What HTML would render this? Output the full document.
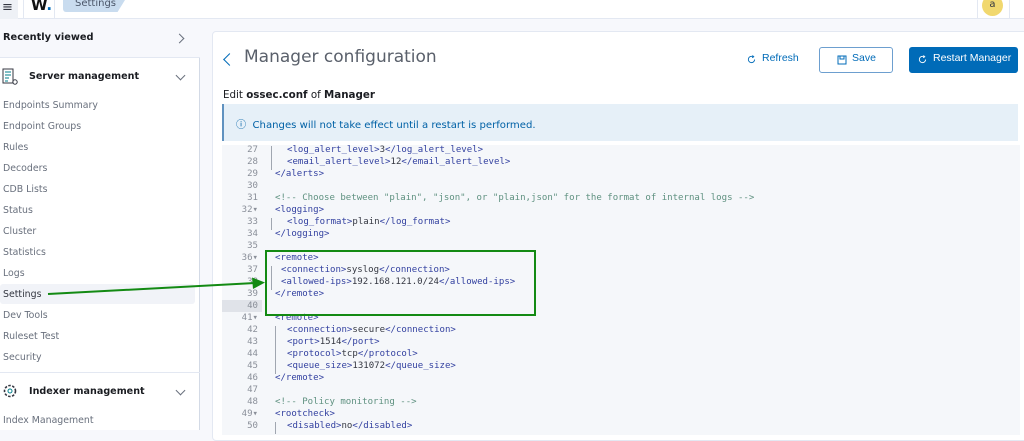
<!DOCTYPE html>
<html><head><meta charset="utf-8"><style>
*{margin:0;padding:0;box-sizing:border-box}
body{width:1024px;height:430px;overflow:hidden;background:#f7f8fc;font-family:"DejaVu Sans","Liberation Sans",sans-serif;color:#343741;position:relative}
.a{position:absolute}
.top{left:0;top:0;width:1024px;height:19px;background:#fff;border-bottom:1px solid #e3e8f2}
.side{left:0;top:20px;width:200px;height:410px;background:#fff;border-right:1px solid #d3dae6}
.si{position:absolute;left:3px;font-size:9.4px;color:#69707d}
.card{left:212px;top:31px;width:820px;height:410px;background:#fff;border:1px solid #e3e8f2;border-radius:4px}
.code{left:222px;top:145px;width:798px;height:290px;background:#f5f7fa}
.ln{position:absolute;left:222px;width:36px;text-align:right;font:9.05px "DejaVu Sans Mono",monospace;color:#8a8f99}
.cl{position:absolute;font:9.05px "DejaVu Sans Mono",monospace;color:#3341a0;white-space:pre}
.cm{color:#5f9180}
.tx{color:#343741}
.g{position:absolute;width:1px;background:#a0a6b0}
.chev{position:absolute;width:7px;height:7px;border-right:1.3px solid #69707d;border-bottom:1.3px solid #69707d}
.c{position:absolute;left:0;top:2px}
</style></head><body>
<div class="a top"></div>
<div class="a" style="left:0;top:0;width:18px;height:19px;background:#eef1f6"></div>
<div class="a" style="left:2px;top:0px;font-size:13px;color:#343741">≡</div>
<div class="a" style="left:23px;top:0;width:1px;height:19px;background:#e3e8f2"></div>
<div class="a" style="left:31px;top:-4px;font-weight:bold;font-size:15px;color:#111">W<span style="color:#006bb8">.</span></div>
<div class="a" style="left:54px;top:0;width:1px;height:19px;background:#e3e8f2"></div>
<div class="a" style="left:63px;top:0;width:62px;height:12px;background:#c9dcef;clip-path:polygon(0 0,100% 0,88% 100%,0 100%);border-radius:0 0 0 3px"></div>
<div class="a" style="left:75px;top:-2px;font-size:10px;color:#4a5568">Settings</div>
<div class="a" style="left:977px;top:0;width:1px;height:19px;background:#e3e8f2"></div>
<div class="a" style="left:982px;top:-5px;width:21px;height:21px;border-radius:50%;background:#f1d86f;font-size:10px;text-align:center;line-height:19px">a</div>
<div class="a" style="left:1009px;top:0;width:1px;height:19px;background:#e3e8f2"></div>

<div class="a side"></div>
<div class="a" style="left:0;top:20px;width:200px;height:38px;background:#f7f8fc;border-bottom:1px solid #e3e8f2"></div>
<div class="a" style="left:3px;top:32px;font-size:9.8px;font-weight:bold;color:#1a1c21">Recently viewed</div>
<div class="chev" style="left:176px;top:35px;transform:rotate(-45deg)"></div>
<svg class="a" style="left:2px;top:68px" width="16" height="18" viewBox="0 0 16 18"><rect x="1" y="1" width="10" height="14" fill="none" stroke="#343741" stroke-width="1"/><path d="M3 4h6M3 7h6M3 10h4M3 13h3" stroke="#007e8a"/><circle cx="13" cy="14" r="2.2" fill="none" stroke="#343741"/></svg>
<div class="a" style="left:29px;top:71px;font-size:9.6px;font-weight:bold;color:#1a1c21">Server management</div>
<div class="chev" style="left:177px;top:72px;transform:rotate(45deg)"></div>
<div class="si" style="top:100px">Endpoints Summary</div>
<div class="si" style="top:121px">Endpoint Groups</div>
<div class="si" style="top:142px">Rules</div>
<div class="si" style="top:163px">Decoders</div>
<div class="si" style="top:184px">CDB Lists</div>
<div class="si" style="top:205px">Status</div>
<div class="si" style="top:226px">Cluster</div>
<div class="si" style="top:247px">Statistics</div>
<div class="si" style="top:268px">Logs</div>
<div class="a" style="left:0;top:284px;width:195px;height:20px;background:#f1f3f8;border-radius:3px"></div>
<div class="si" style="top:289px;color:#343741">Settings</div>
<div class="si" style="top:310px">Dev Tools</div>
<div class="si" style="top:331px">Ruleset Test</div>
<div class="si" style="top:352px">Security</div>
<div class="a" style="left:0;top:372px;width:200px;height:1px;background:#e3e8f2"></div>
<svg class="a" style="left:2px;top:383px" width="16" height="16" viewBox="0 0 16 16"><circle cx="8" cy="8" r="5.5" fill="none" stroke="#343741" stroke-dasharray="2.5 1.5" stroke-width="1.6"/><circle cx="8" cy="8" r="2" fill="none" stroke="#007e8a"/></svg>
<div class="a" style="left:29px;top:386px;font-size:9.6px;font-weight:bold;color:#1a1c21">Indexer management</div>
<div class="chev" style="left:177px;top:387px;transform:rotate(45deg)"></div>
<div class="si" style="top:415px">Index Management</div>

<div class="a card"></div>
<div class="chev" style="left:225px;top:55px;width:9px;height:9px;border-color:#006bb8;border-width:1.5px;transform:rotate(135deg)"></div>
<div class="a" style="left:244px;top:47px;font-size:17px;color:#5a606b">Manager configuration</div>
<svg class="a" style="left:747px;top:55px" width="9" height="9" viewBox="0 0 10 10"><path d="M8.5 5A3.5 3.5 0 1 1 6.5 1.8" fill="none" stroke="#006bb8"/><path d="M6 0.5l1.5 1.5-1.8 1" fill="none" stroke="#006bb8"/></svg>
<div class="a" style="left:762px;top:52px;font-size:10.5px;color:#006bb8;font-family:'Liberation Sans',sans-serif">Refresh</div>
<div class="a" style="left:819px;top:47px;width:74px;height:26px;border:1px solid #6d9fcf;border-radius:3px"></div>
<svg class="a" style="left:837px;top:55px" width="10" height="10" viewBox="0 0 10 10"><rect x="1" y="1" width="8" height="8" fill="none" stroke="#006bb8"/><rect x="3" y="1" width="4" height="3" fill="none" stroke="#006bb8"/></svg>
<div class="a" style="left:852px;top:52px;font-size:10.5px;color:#006bb8;font-family:'Liberation Sans',sans-serif">Save</div>
<div class="a" style="left:909px;top:47px;width:109px;height:26px;background:#006bb8;border-radius:3px"></div>
<svg class="a" style="left:918px;top:55px" width="9" height="9" viewBox="0 0 10 10"><path d="M8.5 5A3.5 3.5 0 1 1 6.5 1.8" fill="none" stroke="#fff"/><path d="M6 0.5l1.5 1.5-1.8 1" fill="none" stroke="#fff"/></svg>
<div class="a" style="left:933px;top:52px;font-size:10.5px;color:#fff;font-family:'Liberation Sans',sans-serif">Restart Manager</div>
<div class="a" style="left:223px;top:89px;font-size:10.3px;color:#1a1c21">Edit <b>ossec.conf</b> of <b>Manager</b></div>
<div class="a" style="left:222px;top:104px;width:796px;height:37px;background:#e6f0f8;border-left:2px solid #6092c0"></div>
<div class="a" style="left:236px;top:116px;font-size:10.1px;color:#0061a6">ⓘ&nbsp; Changes will not take effect until a restart is performed.</div>

<div class="a code"></div>
<div class="a" style="left:222px;top:300px;width:40px;height:12px;background:#e0e3e9"></div>
<div class="a" style="left:0;top:1px;width:1024px;height:430px">
<div class="ln" style="top:144px">27</div><div class="ln" style="top:156px">28</div><div class="ln" style="top:168px">29</div><div class="ln" style="top:180px">30</div><div class="ln" style="top:192px">31</div><div class="ln" style="top:204px">32▾</div><div class="ln" style="top:216px">33</div><div class="ln" style="top:228px">34</div><div class="ln" style="top:240px">35</div><div class="ln" style="top:252px">36▾</div><div class="ln" style="top:264px">37</div><div class="ln" style="top:276px">38</div><div class="ln" style="top:288px">39</div><div class="ln" style="top:300px">40</div><div class="ln" style="top:312px">41▾</div><div class="ln" style="top:324px">42</div><div class="ln" style="top:336px">43</div><div class="ln" style="top:348px">44</div><div class="ln" style="top:360px">45</div><div class="ln" style="top:372px">46</div><div class="ln" style="top:384px">47</div><div class="ln" style="top:396px">48</div><div class="ln" style="top:408px">49▾</div><div class="ln" style="top:420px">50</div>
<div class="g" style="left:271px;top:145px;height:24px"></div>
<div class="g" style="left:271px;top:217px;height:12px"></div>
<div class="g" style="left:271px;top:265px;height:24px"></div>
<div class="g" style="left:275px;top:325px;height:48px"></div>
<div class="g" style="left:275px;top:421px;height:12px"></div>
<div class="cl" style="left:287px;top:144px">&lt;log_alert_level&gt;<span class="tx">3</span>&lt;/log_alert_level&gt;</div>
<div class="cl" style="left:287px;top:156px">&lt;email_alert_level&gt;<span class="tx">12</span>&lt;/email_alert_level&gt;</div>
<div class="cl" style="left:275px;top:168px">&lt;/alerts&gt;</div>
<div class="cl cm" style="left:275px;top:192px">&lt;!-- Choose between "plain", "json", or "plain,json" for the format of internal logs --&gt;</div>
<div class="cl" style="left:275px;top:204px">&lt;logging&gt;</div>
<div class="cl" style="left:287px;top:216px">&lt;log_format&gt;<span class="tx">plain</span>&lt;/log_format&gt;</div>
<div class="cl" style="left:275px;top:228px">&lt;/logging&gt;</div>
<div class="cl" style="left:275px;top:252px">&lt;remote&gt;</div>
<div class="cl" style="left:281px;top:264px">&lt;connection&gt;<span class="tx">syslog</span>&lt;/connection&gt;</div>
<div class="cl" style="left:281px;top:276px">&lt;allowed-ips&gt;<span class="tx">192.168.121.0/24</span>&lt;/allowed-ips&gt;</div>
<div class="cl" style="left:275px;top:288px">&lt;/remote&gt;</div>
<div class="cl" style="left:275px;top:312px">&lt;remote&gt;</div>
<div class="cl" style="left:287px;top:324px">&lt;connection&gt;<span class="tx">secure</span>&lt;/connection&gt;</div>
<div class="cl" style="left:287px;top:336px">&lt;port&gt;<span class="tx">1514</span>&lt;/port&gt;</div>
<div class="cl" style="left:287px;top:348px">&lt;protocol&gt;<span class="tx">tcp</span>&lt;/protocol&gt;</div>
<div class="cl" style="left:287px;top:360px">&lt;queue_size&gt;<span class="tx">131072</span>&lt;/queue_size&gt;</div>
<div class="cl" style="left:275px;top:372px">&lt;/remote&gt;</div>
<div class="cl cm" style="left:275px;top:396px">&lt;!-- Policy monitoring --&gt;</div>
<div class="cl" style="left:275px;top:408px">&lt;rootcheck&gt;</div>
<div class="cl" style="left:287px;top:420px">&lt;disabled&gt;<span class="tx">no</span>&lt;/disabled&gt;</div>
</div>
<div class="a" style="left:265px;top:250px;width:271px;height:66px;border:2px solid #138a13"></div>
<svg class="a" style="left:0;top:0" width="1024" height="430"><line x1="48" y1="294" x2="256" y2="283" stroke="#138a13" stroke-width="2"/><path d="M265 282.5L252 277.5L253 289Z" fill="#138a13"/></svg>
</body></html>
